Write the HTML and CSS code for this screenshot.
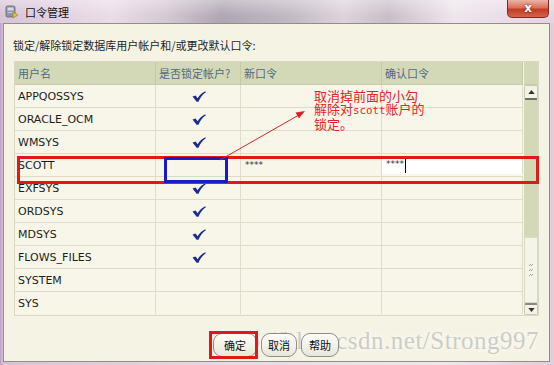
FILE: index.html
```html
<!DOCTYPE html>
<html lang="zh">
<head>
  <meta charset="UTF-8" />
  <title>口令管理</title>
  <link rel="stylesheet" href="styles.css">
</head>
<body>
  <div class="window">
    <div class="titlebar">
      <svg class="app-icon" viewBox="0 0 14 14">
        <rect x="1" y="1" width="9" height="11" rx="1.5" fill="#8d97ab" stroke="#5b6476" stroke-width="0.8"/>
        <rect x="2.5" y="2.5" width="6" height="3" fill="#d6dbe6"/>
        <rect x="2.5" y="7" width="6" height="1" fill="#c2c8d4"/>
        <path d="M8 7 L13 10 L8 13 Z" fill="#e9c22a" stroke="#9a7a10" stroke-width="0.6"/>
      </svg>
      <span class="title">口令管理</span>
      <div class="close">x</div>
    </div>

    <div class="panel">
      <p class="intro">锁定/解除锁定数据库用户帐户和/或更改默认口令:</p>

      <div class="grid-wrap">
        <div class="grid">
          <div class="row head">
            <div class="cell">用户名</div>
            <div class="cell">是否锁定帐户?</div>
            <div class="cell">新口令</div>
            <div class="cell">确认口令</div>
          </div>
          <div class="row">
            <div class="cell name">APPQOSSYS</div>
            <div class="cell check"><svg class="tick" viewBox="0 0 14 11"><path d="M0.5 5.6 L3.6 4.4 L5.6 7.2 C7.6 4 10.2 1.8 13.4 0.3 L13.8 1.3 C10.6 3.6 8.2 6.6 6.5 10.7 L4.6 10.7 Z"/></svg></div>
            <div class="cell"></div>
            <div class="cell"></div>
          </div>
          <div class="row">
            <div class="cell name">ORACLE_OCM</div>
            <div class="cell check"><svg class="tick" viewBox="0 0 14 11"><path d="M0.5 5.6 L3.6 4.4 L5.6 7.2 C7.6 4 10.2 1.8 13.4 0.3 L13.8 1.3 C10.6 3.6 8.2 6.6 6.5 10.7 L4.6 10.7 Z"/></svg></div>
            <div class="cell"></div>
            <div class="cell"></div>
          </div>
          <div class="row">
            <div class="cell name">WMSYS</div>
            <div class="cell check"><svg class="tick" viewBox="0 0 14 11"><path d="M0.5 5.6 L3.6 4.4 L5.6 7.2 C7.6 4 10.2 1.8 13.4 0.3 L13.8 1.3 C10.6 3.6 8.2 6.6 6.5 10.7 L4.6 10.7 Z"/></svg></div>
            <div class="cell"></div>
            <div class="cell"></div>
          </div>
          <div class="row">
            <div class="cell name">SCOTT</div>
            <div class="cell"></div>
            <div class="cell pw">****</div>
            <div class="cell pw editing"><span class="caret">****</span></div>
          </div>
          <div class="row">
            <div class="cell name">EXFSYS</div>
            <div class="cell check"><svg class="tick" viewBox="0 0 14 11"><path d="M0.5 5.6 L3.6 4.4 L5.6 7.2 C7.6 4 10.2 1.8 13.4 0.3 L13.8 1.3 C10.6 3.6 8.2 6.6 6.5 10.7 L4.6 10.7 Z"/></svg></div>
            <div class="cell"></div>
            <div class="cell"></div>
          </div>
          <div class="row">
            <div class="cell name">ORDSYS</div>
            <div class="cell check"><svg class="tick" viewBox="0 0 14 11"><path d="M0.5 5.6 L3.6 4.4 L5.6 7.2 C7.6 4 10.2 1.8 13.4 0.3 L13.8 1.3 C10.6 3.6 8.2 6.6 6.5 10.7 L4.6 10.7 Z"/></svg></div>
            <div class="cell"></div>
            <div class="cell"></div>
          </div>
          <div class="row">
            <div class="cell name">MDSYS</div>
            <div class="cell check"><svg class="tick" viewBox="0 0 14 11"><path d="M0.5 5.6 L3.6 4.4 L5.6 7.2 C7.6 4 10.2 1.8 13.4 0.3 L13.8 1.3 C10.6 3.6 8.2 6.6 6.5 10.7 L4.6 10.7 Z"/></svg></div>
            <div class="cell"></div>
            <div class="cell"></div>
          </div>
          <div class="row">
            <div class="cell name">FLOWS_FILES</div>
            <div class="cell check"><svg class="tick" viewBox="0 0 14 11"><path d="M0.5 5.6 L3.6 4.4 L5.6 7.2 C7.6 4 10.2 1.8 13.4 0.3 L13.8 1.3 C10.6 3.6 8.2 6.6 6.5 10.7 L4.6 10.7 Z"/></svg></div>
            <div class="cell"></div>
            <div class="cell"></div>
          </div>
          <div class="row">
            <div class="cell name">SYSTEM</div>
            <div class="cell"></div>
            <div class="cell"></div>
            <div class="cell"></div>
          </div>
          <div class="row">
            <div class="cell name">SYS</div>
            <div class="cell"></div>
            <div class="cell"></div>
            <div class="cell"></div>
          </div>
        </div>

        <div class="scrollbar">
          <div class="sb-head"></div>
          <div class="sb-btn up"><svg viewBox="0 0 8 5"><path d="M0 5 L4 0 L8 5 Z"/></svg></div>
          <div class="sb-track"></div>
          <div class="sb-thumb">
            <svg viewBox="0 0 8 14"><path d="M2 3 L4 1 M4 3 L6 1 M2 8 L4 6 M4 8 L6 6 M2 13 L4 11 M4 13 L6 11"/></svg>
          </div>
          <div class="sb-btn down"><svg viewBox="0 0 8 5"><path d="M0 0 L8 0 L4 5 Z"/></svg></div>
        </div>
      </div>

      <div class="buttons">
        <button class="btn ok">确定</button>
        <button class="btn cancel">取消</button>
        <button class="btn help">帮助</button>
      </div>
    </div>

    <div class="watermark">http://blog.csdn.net/Strong997</div>

    <div class="mark mark-row"></div>
    <div class="mark mark-cell"></div>
    <div class="mark mark-ok"></div>
    <svg class="arrow" viewBox="0 0 554 365">
      <line x1="220" y1="160" x2="298" y2="115.5"/>
      <polygon points="305,111 298.9,118.5 295.5,112.5"/>
    </svg>
    <div class="note">取消掉前面的小勾<br>解除对<span class="mono">scott</span>账户的<br>锁定。</div>
  </div>
</body>
</html>
```

FILE: styles.css
```css
* { box-sizing: border-box; }
body {
  margin: 0;
  width: 554px;
  height: 365px;
  overflow: hidden;
  font-family: "Noto Sans CJK SC", sans-serif;
  background: #e4d4e2;
}
.window {
  position: relative;
  width: 554px;
  height: 365px;
  background: linear-gradient(to right, #bba0c4 0, #d6c2d8 3px, #e6dae4 40%, #efe7ee 80%, #e2cdde 100%);
}
.titlebar {
  height: 23px;
  display: flex;
  align-items: center;
  padding-left: 5px;
  background:
    linear-gradient(to bottom, rgba(255,255,255,0.35), rgba(255,255,255,0) 70%),
    linear-gradient(to right, #d8c3d7 0, #eadde7 20%, #d4c8d3 30%, #aea6b2 40%, #c0b8c2 52%, #ddd3da 62%, #c9bec8 70%, #eee6ec 82%, #e6d4e2 100%);
}
.app-icon { width: 14px; height: 14px; }
.title {
  margin-left: 6px;
  font-size: 11px;
  color: #111;
}
.close {
  margin-left: auto;
  margin-right: 5px;
  align-self: flex-start;
  width: 42px;
  height: 18px;
  border: 1px solid #7c2b1f;
  border-top: none;
  border-radius: 0 0 5px 5px;
  background: linear-gradient(#ecb4a4, #d9705a 45%, #c23c22 55%, #d5644a);
  color: #fff;
  font: bold 12px "DejaVu Sans", sans-serif;
  text-align: center;
  line-height: 16px;
  text-shadow: 0 0 2px #5a1a10;
}

.panel {
  margin: 0 4px 0 3px;
  border: 1px solid #8f8f86;
  background: #f5f4e4;
  padding: 13px 0 4px 10px;
}
.intro {
  margin: 0 0 8px -1px;
  font-size: 11px;
  line-height: 16px;
  color: #1e1e1e;
}

.grid-wrap {
  display: flex;
  width: 525px;
  border: 1px solid #d8d8c4;
  background: #f7f6e8;
}
.grid { width: 508px; }
.row {
  display: grid;
  grid-template-columns: 141px 85px 141px 141px;
  height: 23px;
  border-bottom: 1px solid #deddc9;
}
.row:last-child { border-bottom: none; height: 22px; }
.cell {
  display: flex;
  align-items: center;
  padding-left: 3px;
  border-right: 1px solid #deddc9;
  font-size: 11px;
}
.head { background: #d3d8b7; border-bottom-color: #c6cba8; }
.head .cell { color: #4f6886; border-right-color: #c4c9a6; }
.name {
  font-family: "DejaVu Sans", sans-serif;
  color: #1e1e1e;
}
.check { justify-content: center; padding-left: 2px; }
.tick { width: 14px; height: 11px; fill: #1b2b8e; }
.pw {
  font-family: "DejaVu Sans", sans-serif;
  font-size: 9px;
  color: #333;
  padding-left: 4px;
}
.editing { background: #fff; margin: 2px 0; }
.caret {
  border-right: 1px solid #000;
  padding: 1px 1px 4px 0;
}

.scrollbar {
  width: 14px;
  margin-left: 1px;
  display: flex;
  flex-direction: column;
}
.sb-head { height: 23px; background: #d3d8b7; border-bottom: 1px solid #c6cba8; }
.sb-btn {
  display: flex;
  align-items: center;
  justify-content: center;
  background: #f3f2e6;
  border: 1px solid #c8c8b4;
  border-radius: 2px;
}
.sb-btn svg { width: 7px; height: 4px; fill: #333; }
.sb-btn.up { height: 15px; border-bottom: 2px solid #6e6e62; }
.sb-btn.down { height: 12px; border-top: 2px solid #8a8a7c; }
.sb-track { height: 137px; background: #d3d8b7; }
.sb-thumb {
  height: 66px;
  background: #f5f4e8;
  border: 1px solid #dad9c6;
  display: flex;
  align-items: center;
  justify-content: center;
}
.sb-thumb svg {
  width: 8px;
  height: 14px;
  stroke: #a8a898;
  stroke-width: 1;
  fill: none;
}

.buttons {
  position: relative;
  z-index: 2;
  display: flex;
  justify-content: center;
  gap: 4px;
  margin-top: 17px;
  padding-right: 11px;
}
.btn {
  height: 24px;
  padding: 0;
  font-family: "Noto Sans CJK SC", sans-serif;
  font-size: 11px;
  color: #111;
  border: 1px solid #8d8e84;
  border-radius: 9px;
  background: linear-gradient(#fdfdf8, #e8e7da);
}
.ok { width: 44px; }
.cancel { width: 36px; }
.help { width: 38px; }

.watermark {
  position: absolute;
  z-index: 1;
  right: 11px;
  top: 327px;
  padding: 0 4px 6px;
  font-family: "Liberation Serif", serif;
  font-size: 25px;
  letter-spacing: 0.5px;
  white-space: nowrap;
  color: rgba(160, 160, 160, 0.5);
  text-shadow: 0 0 4px rgba(255, 255, 255, 0.95);
}

.mark { position: absolute; z-index: 3; border: 3px solid #e01818; }
.mark-row { left: 17px; top: 156px; width: 522px; height: 28px; }
.mark-cell { left: 164px; top: 157px; width: 64px; height: 26px; border-color: #1a1ac8; }
.mark-ok { left: 209px; top: 331px; width: 49px; height: 28px; }

.arrow {
  position: absolute;
  z-index: 3;
  left: 0;
  top: 0;
  width: 554px;
  height: 365px;
  pointer-events: none;
}
.arrow line { stroke: #d02828; stroke-width: 1; }
.arrow polygon { fill: #d02828; }

.note {
  position: absolute;
  z-index: 3;
  left: 314px;
  top: 89px;
  font-size: 13px;
  line-height: 13px;
  color: #e0262b;
}
.mono {
  font-family: "DejaVu Sans Mono", monospace;
  font-size: 10.8px;
}
```
